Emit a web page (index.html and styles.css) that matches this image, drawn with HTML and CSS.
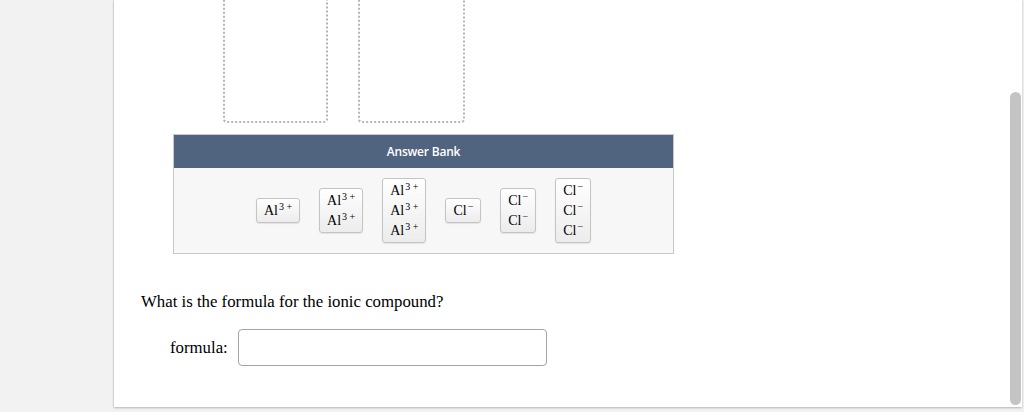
FILE: index.html
```html
<!DOCTYPE html>
<html>
<head>
<meta charset="utf-8">
<link rel="stylesheet" href="styles.css">
</head>
<body>
<div class="panel">
  <div class="drops">
    <div class="drop drop-a"></div>
    <div class="drop drop-b"></div>
  </div>
  <div class="bank">
    <div class="bank-head">Answer Bank</div>
    <div class="bank-body">
      <div class="tile"><span>Al<sup>3 +</sup></span></div>
      <div class="tile"><span>Al<sup>3 +</sup></span><span>Al<sup>3 +</sup></span></div>
      <div class="tile"><span>Al<sup>3 +</sup></span><span>Al<sup>3 +</sup></span><span>Al<sup>3 +</sup></span></div>
      <div class="tile"><span>Cl<sup>−</sup></span></div>
      <div class="tile"><span>Cl<sup>−</sup></span><span>Cl<sup>−</sup></span></div>
      <div class="tile"><span>Cl<sup>−</sup></span><span>Cl<sup>−</sup></span><span>Cl<sup>−</sup></span></div>
    </div>
  </div>
  <p class="question">What is the formula for the ionic compound?</p>
  <div class="answer-row">
    <label class="answer-label">formula:</label>
    <input class="answer-input" type="text">
  </div>
</div>
<div class="scrollbar"></div>
</body>
</html>
```
FILE: styles.css
```css
html, body {
  margin: 0;
  padding: 0;
}
body {
  background: #f2f2f2;
  width: 1024px;
  height: 412px;
  overflow: hidden;
  position: relative;
  font-family: "Liberation Serif", "Times New Roman", serif;
  color: #000;
}
.panel {
  margin-left: 114px;
  width: 908px;
  height: 407px;
  background: #fff;
  box-shadow: -1px 0 1px rgba(0,0,0,0.06), 0 1px 2px rgba(0,0,0,0.25);
  overflow: hidden;
  display: flex;
  flex-direction: column;
}
.drops {
  display: flex;
  gap: 30px;
  padding-left: 109px;
  margin-top: -20px;
}
.drop {
  height: 143px;
  border: 2px dotted #b5b5b5;
  border-radius: 4px;
  box-sizing: border-box;
}
.drop-a { width: 105px; }
.drop-b { width: 107px; }
.bank {
  margin-top: 11px;
  margin-left: 59px;
  width: 501px;
  border: 1px solid #c8c8c8;
  box-sizing: border-box;
}
.bank-head {
  height: 33px;
  background: #50647f;
  color: #fff;
  font-family: "Open Sans", "DejaVu Sans", sans-serif;
  font-weight: 600;
  font-size: 12px;
  display: flex;
  align-items: center;
  justify-content: center;
  letter-spacing: -0.2px;
}
.bank-body {
  height: 85px;
  background: #f7f7f7;
  display: flex;
  align-items: center;
  justify-content: center;
  gap: 19px;
}
.tile {
  display: flex;
  flex-direction: column;
  align-items: center;
  padding: 2px 7px 1px;
  border: 1px solid #c4c4c4;
  border-radius: 3px;
  background: linear-gradient(#ffffff, #ececec);
  box-shadow: 0 1px 1px rgba(0,0,0,0.08);
  font-size: 14px;
  line-height: 20px;
  white-space: pre;
}
.tile sup {
  font-size: 10px;
  line-height: 0;
  vertical-align: 5px;
  margin-left: 1px;
}
.question {
  margin: 38px 0 0 27px;
  font-size: 16.8px;
  line-height: 20px;
}
.answer-row {
  margin: 17px 0 0 56px;
  display: flex;
  align-items: center;
  gap: 10px;
}
.answer-label {
  font-size: 16.8px;
  line-height: 20px;
}
.answer-input {
  width: 309px;
  height: 37px;
  box-sizing: border-box;
  border: 1.5px solid #a4a4a4;
  border-radius: 4px;
  background: #fff;
  margin: 0;
  padding: 0 6px;
  outline: none;
}
.scrollbar {
  position: absolute;
  left: 1010px;
  top: 92px;
  width: 11px;
  height: 313px;
  border-radius: 6px;
  background: #c4c4c4;
}
```
